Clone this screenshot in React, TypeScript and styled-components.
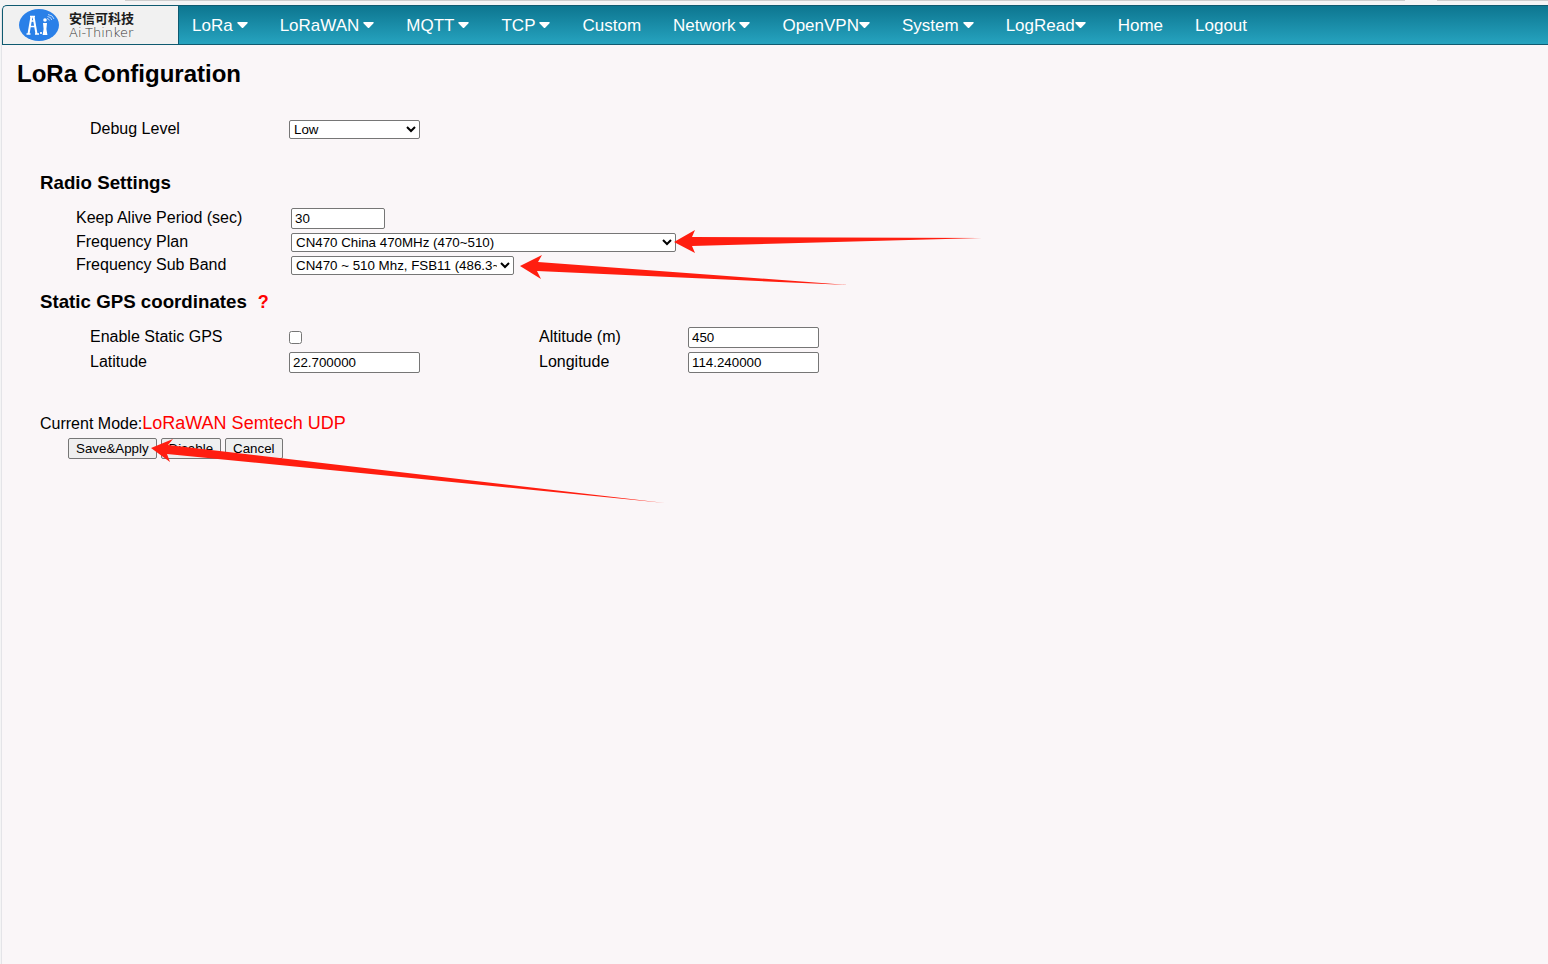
import React from "react";
import styled, { createGlobalStyle } from "styled-components";

const GlobalStyle = createGlobalStyle`
  *, *::before, *::after { box-sizing: border-box; }
  body {
    margin: 0;
    background: #f4f4f5;
    color: #000;
    font-family: "Liberation Sans", Arial, sans-serif;
    font-size: 16px;
    line-height: 18px;
  }
`;

const Window = styled.div`
  position: relative;
  display: flex;
  flex-direction: column;
  min-height: 100vh;
`;

const TabStrip = styled.div`
  display: flex;
  gap: 32px;
  height: 5px;
  padding-left: 125px;
`;

const TabEdge = styled.span<{ $grow: number }>`
  flex: ${(p) => p.$grow} 1 0;
  height: 1px;
  background: #cdcdcd;
`;

const Page = styled.div`
  flex: 1;
  margin-left: 1px;
  border-left: 1px solid #e4e4e8;
  border-top-left-radius: 6px;
  background: #faf6f8;
`;

const NavBar = styled.nav`
  display: flex;
  height: 40px;
  border: 1px solid #0f5a70;
  border-right: 0;
  border-top-left-radius: 5px;
  background: linear-gradient(#0d7690, #26a3bf);
  overflow: hidden;
`;

const Brand = styled.a`
  display: flex;
  align-items: center;
  gap: 10px;
  width: 176px;
  padding-left: 16px;
  border-right: 1px solid #0f5a70;
  background: #f1f1f1;
  text-decoration: none;
`;

const BrandText = styled.span`
  display: flex;
  flex-direction: column;
  padding-bottom: 1px;
`;

const BrandChinese = styled.span`
  color: #1c1c1c;
  font-family: "Noto Sans CJK SC", sans-serif;
  font-size: 13px;
  font-weight: 700;
  line-height: 15px;
`;

const BrandLatin = styled.span`
  color: #333;
  font-family: "DejaVu Sans", sans-serif;
  font-size: 13px;
  font-weight: 200;
  line-height: 15px;
`;

const Menu = styled.ul`
  display: flex;
  gap: 32px;
  margin: 0;
  padding: 0 0 0 13px;
  list-style: none;
`;

const MenuLink = styled.a<{ $tight?: boolean }>`
  display: flex;
  align-items: center;
  gap: ${(p) => (p.$tight ? 0 : 4)}px;
  height: 38px;
  padding-top: 2px;
  color: #fff;
  font-size: 17px;
  text-decoration: none;
  white-space: nowrap;
`;

const Main = styled.main`
  padding: 15px 15px 0;
`;

const Title = styled.h1`
  margin: 0;
  font-size: 24px;
  line-height: 28px;
`;

const Section = styled.section<{ $top: number }>`
  margin: ${(p) => p.$top}px 0 0 23px;
`;

const SectionTitle = styled.h3`
  margin: 0 0 13px;
  line-height: 24px;
`;

const Help = styled.a`
  margin-left: 11px;
  color: #f00;
  font-size: 18px;
  text-decoration: none;
`;

const Fields = styled.div<{ $columns: string; $indent: number }>`
  display: grid;
  grid-template-columns: ${(p) => p.$columns};
  row-gap: 4px;
  align-items: baseline;
  justify-items: start;
  padding-left: ${(p) => p.$indent}px;
`;

const Label = styled.label`
  height: 18px;
  white-space: nowrap;
`;

const Input = styled.input<{ $width: number }>`
  width: ${(p) => p.$width}px;
  height: 21px;
  margin: 0;
  border: 1px solid #767676;
  border-radius: 2px;
  padding: 1px 3px;
  background: #fff;
  font-family: inherit;
`;

const Select = styled.select<{ $width: number }>`
  width: ${(p) => p.$width}px;
  height: 19px;
  margin: 0;
  border: 1px solid #767676;
  border-radius: 2px;
  background: #fff;
  color: #000;
  font-family: inherit;
`;

const Checkbox = styled.input`
  width: 13px;
  height: 13px;
  margin: 0;
  align-self: center;
`;

const ModeLine = styled.p`
  margin: 0;
  line-height: 20px;
`;

const ModeValue = styled.span`
  color: #f00;
  font-size: 18px;
`;

const Actions = styled.div`
  display: flex;
  gap: 4px;
  margin-top: 4px;
  padding-left: 28px;
`;

const Button = styled.button`
  height: 21px;
  border: 1px solid #767676;
  border-radius: 2px;
  padding: 0 7px;
  background: #efefef;
  color: #000;
  font-family: inherit;
`;

const Annotations = styled.svg`
  position: absolute;
  top: 0;
  left: 0;
  pointer-events: none;
`;

const menu: { label: string; caret?: boolean; tight?: boolean }[] = [
  { label: "LoRa", caret: true },
  { label: "LoRaWAN", caret: true },
  { label: "MQTT", caret: true },
  { label: "TCP", caret: true },
  { label: "Custom" },
  { label: "Network", caret: true },
  { label: "OpenVPN", caret: true, tight: true },
  { label: "System", caret: true },
  { label: "LogRead", caret: true, tight: true },
  { label: "Home" },
  { label: "Logout" },
];

function Caret() {
  return (
    <svg width="11" height="8" viewBox="0 0 11 8" fill="#fff" aria-hidden="true">
      <path d="M1 0h9q1.200.3.5 1.300L6.200 5.700q-.7.600-1.400 0L.5 1.300Q-.2.300 1 0z" />
    </svg>
  );
}

function LogoMark() {
  return (
    <svg width="40" height="32" viewBox="0 0 40 32" aria-hidden="true">
      <ellipse cx="20" cy="16" rx="20" ry="16" fill="#2a80e8" />
      <g fill="none" stroke="#fff">
        <path d="M12.500 7.500L9.500 25M14.500 7.500L17.500 25" strokeWidth="2" />
        <path d="M11 7.500h5M12 12h3M11 17.500h5M7.500 25h4M16 25h4" strokeWidth="1.500" />
      </g>
      <rect x="21" y="23" width="2" height="2" fill="#dbe9fb" />
      <circle cx="26" cy="11" r="1.800" fill="#fff" />
      <path d="M24 14h4l-.6 6 1 6h-4.800l1-6z" fill="#fff" />
      <path
        d="M28 9.500q2 .2 2.300 2M28.500 7.500q3.600.3 4.300 3.500M29 5.500q5 .6 6 4.500"
        fill="none"
        stroke="#b9d6f9"
      />
    </svg>
  );
}

export default function App() {
  return (
    <>
      <GlobalStyle />
      <Window>
        <TabStrip>
          <TabEdge $grow={1280} />
          <TabEdge $grow={111} />
        </TabStrip>
        <Page>
          <NavBar>
            <Brand href="#home">
              <LogoMark />
              <BrandText>
                <BrandChinese>安信可科技</BrandChinese>
                <BrandLatin>Ai-Thinker</BrandLatin>
              </BrandText>
            </Brand>
            <Menu>
              {menu.map((item) => (
                <li key={item.label}>
                  <MenuLink href={`#${item.label}`} $tight={item.tight}>
                    {item.label}
                    {item.caret && <Caret />}
                  </MenuLink>
                </li>
              ))}
            </Menu>
          </NavBar>

          <Main>
            <Title>LoRa Configuration</Title>

            <Section $top={32}>
              <Fields $columns="199px auto" $indent={50}>
                <Label htmlFor="debug">Debug Level</Label>
                <Select id="debug" $width={131}>
                  <option>Low</option>
                </Select>
              </Fields>
            </Section>

            <Section $top={32}>
              <SectionTitle>Radio Settings</SectionTitle>
              <Fields $columns="215px auto" $indent={36}>
                <Label htmlFor="keepalive">Keep Alive Period (sec)</Label>
                <Input id="keepalive" $width={94} defaultValue="30" />
                <Label htmlFor="plan">Frequency Plan</Label>
                <Select id="plan" $width={385}>
                  <option>CN470 China 470MHz (470~510)</option>
                </Select>
                <Label htmlFor="subband">Frequency Sub Band</Label>
                <Select id="subband" $width={223}>
                  <option>CN470 ~ 510 Mhz, FSB11 (486.3~487.7)</option>
                </Select>
              </Fields>
            </Section>

            <Section $top={15}>
              <SectionTitle>
                Static GPS coordinates<Help href="#gps-help">?</Help>
              </SectionTitle>
              <Fields $columns="199px 250px 149px auto" $indent={50}>
                <Label htmlFor="gps">Enable Static GPS</Label>
                <Checkbox id="gps" type="checkbox" />
                <Label htmlFor="altitude">Altitude (m)</Label>
                <Input id="altitude" $width={131} defaultValue="450" />
                <Label htmlFor="latitude">Latitude</Label>
                <Input id="latitude" $width={131} defaultValue="22.700000" />
                <Label htmlFor="longitude">Longitude</Label>
                <Input id="longitude" $width={131} defaultValue="114.240000" />
              </Fields>
            </Section>

            <Section $top={40}>
              <ModeLine>
                Current Mode:<ModeValue>LoRaWAN Semtech UDP</ModeValue>
              </ModeLine>
              <Actions>
                <Button type="button">Save&amp;Apply</Button>
                <Button type="button">Disable</Button>
                <Button type="button">Cancel</Button>
              </Actions>
            </Section>
          </Main>
        </Page>

        <Annotations width="1000" height="520" viewBox="0 0 1000 520" fill="#ff1e10" aria-hidden="true">
          <path d="M674 242L695 230L692 237L982 238L692 246L695 253Z" />
          <path d="M520 266L542 255L538 262L848 285L537 271L541 279Z" />
          <path d="M151 448L173 439L168 445L665 503L167 454L170 462Z" />
        </Annotations>
      </Window>
    </>
  );
}
